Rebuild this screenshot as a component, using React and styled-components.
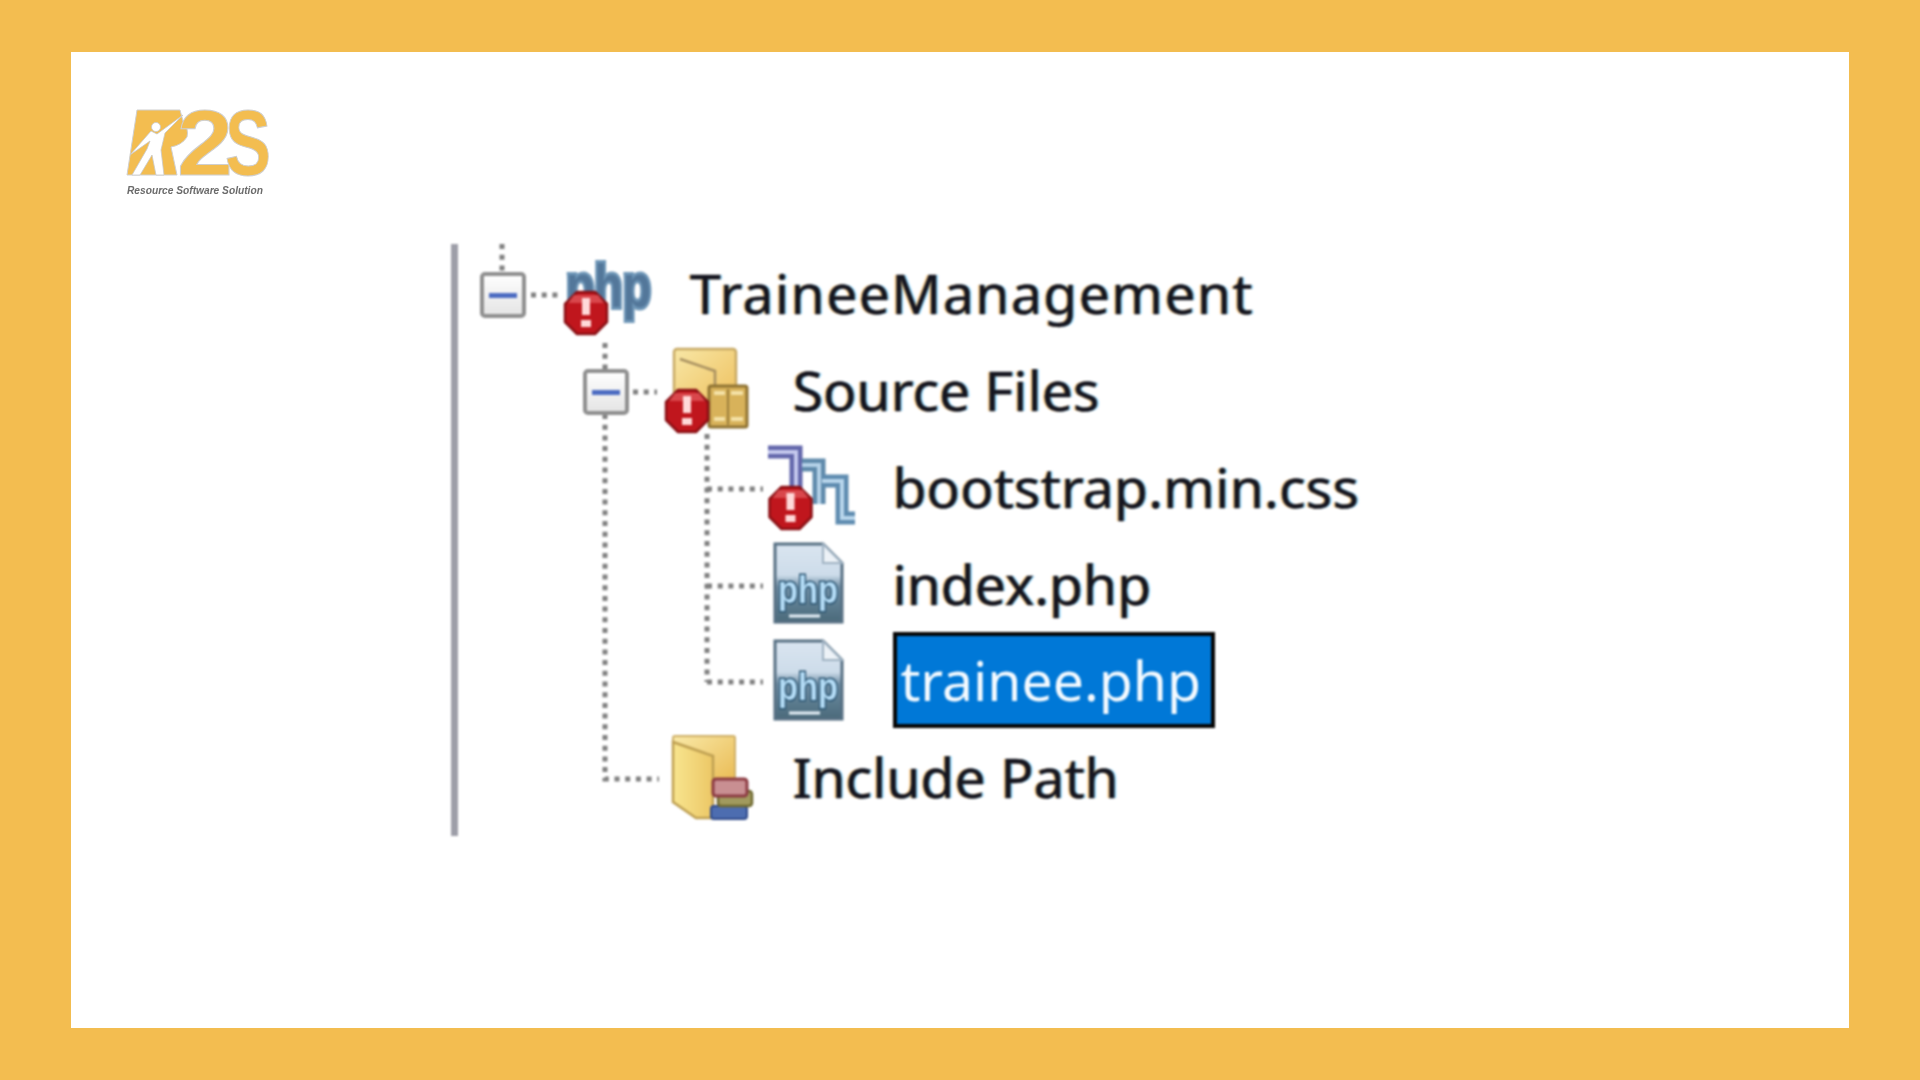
import React from 'react';
import styled, { createGlobalStyle } from 'styled-components';

const GlobalStyle = createGlobalStyle`
  html, body {
    margin: 0;
    padding: 0;
    background: #f3bd50;
  }
`;

const Page = styled.div`
  box-sizing: border-box;
  width: 1920px;
  height: 1080px;
  padding: 52px 71px;
  background: #f3bd50;
`;

const Card = styled.div`
  box-sizing: border-box;
  height: 976px;
  padding: 57px 56px 0;
  background: #ffffff;
`;

const LogoBox = styled.div`
  width: 145px;
  height: 87px;
  margin-bottom: 48px;
  filter: blur(0.4px);

  svg {
    display: block;
    overflow: visible;
  }
`;

const LogoCaption = styled.div`
  margin-top: 8px;
  font-family: 'Liberation Sans', Arial, sans-serif;
  font-style: italic;
  font-weight: 700;
  font-size: 10.2px;
  line-height: 12px;
  color: #6b6b6b;
  white-space: nowrap;
`;

const Tree = styled.div`
  position: relative;
  box-sizing: border-box;
  width: 1000px;
  height: 592px;
  margin-left: 324px;
  padding-top: 3px;
  border-left: 7px solid #9d9ea8;
  filter: blur(1px);
`;

const Connectors = styled.svg`
  position: absolute;
  left: -7px;
  top: 0;
  width: 400px;
  height: 592px;
`;

const Row = styled.div`
  position: relative;
  display: flex;
  align-items: center;
  height: 96.8px;
  padding-left: ${p => 22 + p.$level * 102.7}px;
`;

const ExpanderSlot = styled.div`
  flex: none;
  width: 85px;
  height: 46px;
`;

const IconSlot = styled.div`
  flex: none;
  width: 125px;
  height: 90px;

  svg {
    display: block;
    overflow: visible;
  }
`;

const Label = styled.div`
  display: flex;
  align-items: center;
  box-sizing: border-box;
  height: 96px;
  margin-left: ${p => (p.$selected ? '-2px' : p.$level === 2 ? '-3px' : '0')};
  margin-bottom: ${p => (p.$selected ? '5px' : '0')};
  padding: ${p => (p.$selected ? '0 10px 0 3px' : '0 0 5px')};
  border: ${p => (p.$selected ? '4px solid #050505' : '0')};
  background: ${p => (p.$selected ? '#0078d7' : 'transparent')};
  color: ${p => (p.$selected ? '#f4faff' : '#15151f')};
  font-family: 'Noto Sans', 'Open Sans', sans-serif;
  font-size: 55.3px;
  letter-spacing: ${p => p.$tracking || 0}px;
  line-height: 1;
  white-space: nowrap;
  -webkit-text-stroke: ${p => (p.$selected ? '0' : '0.4px currentColor')};
  text-shadow: ${p =>
    p.$selected
      ? 'none'
      : '-2px 0 rgba(255, 180, 70, 0.6), 2px 0 rgba(70, 190, 255, 0.55)'};
`;

const PhpLetters = styled.text`
  font-family: 'Liberation Sans', sans-serif;
  font-weight: 700;
  paint-order: stroke;
`;

const Expander = () => (
  <svg width="46" height="46" viewBox="0 0 46 46">
    <defs>
      <linearGradient id="expander" x1="0" y1="0" x2="0" y2="1">
        <stop offset="0" stopColor="#ffffff" />
        <stop offset="1" stopColor="#e4e4e4" />
      </linearGradient>
    </defs>
    <rect x="2" y="2" width="42" height="42" rx="3" fill="url(#expander)" stroke="#8f8f8f" strokeWidth="4" />
    <rect x="9" y="21" width="28" height="5" fill="#4c6cc2" />
  </svg>
);

const ErrorBadge = ({ x, y }) => (
  <g transform={`translate(${x} ${y})`}>
    <polygon
      points="-9,-21 9,-21 21,-9 21,9 9,21 -9,21 -21,9 -21,-9"
      fill="#c0161d"
      stroke="#8a1015"
      strokeWidth="2.5"
      strokeLinejoin="round"
    />
    <path d="M-12 -18 H12 L18 -10 H-18 Z" fill="#d9474c" />
    <rect x="-4" y="-15" width="8" height="17" fill="#ffd9d9" />
    <rect x="-5" y="7" width="10" height="7" fill="#ffd9d9" />
  </g>
);

const ProjectIcon = () => (
  <svg width="90" height="90" viewBox="0 0 90 90">
    <PhpLetters
      x="1"
      y="57"
      fontSize="62"
      textLength="85"
      lengthAdjust="spacingAndGlyphs"
      fill="#53779a"
      stroke="#6f97b8"
      strokeWidth="6"
    >
      php
    </PhpLetters>
    <ErrorBadge x={21} y={63} />
  </svg>
);

const SourceIcon = () => (
  <svg width="90" height="90" viewBox="0 0 90 90">
    <defs>
      <linearGradient id="srcFolder" x1="0" y1="0" x2="1" y2="1">
        <stop offset="0" stopColor="#f8e7a6" />
        <stop offset="1" stopColor="#eebf5c" />
      </linearGradient>
    </defs>
    <rect x="6" y="2" width="62" height="58" rx="3" fill="url(#srcFolder)" stroke="#c7a964" strokeWidth="2.5" />
    <path d="M12 12 L47 24 V48" fill="none" stroke="#a89060" strokeWidth="2.5" />
    <rect x="41" y="39" width="38" height="41" rx="2" fill="#d8b25a" stroke="#8f7332" strokeWidth="3" />
    <path d="M46 46 H57 M63 46 H75 M46 72 H57 M63 72 H75" stroke="#f4e2a8" strokeWidth="4" />
    <path d="M60 42 V78" stroke="#9c7f3c" strokeWidth="2" />
    <ErrorBadge x={19} y={64} />
  </svg>
);

const CssIcon = () => {
  const tubes = [
    { d: 'M-2 8 H26 V46', outer: '#6367ab', inner: '#c5c9ee' },
    { d: 'M32 21 H49 V60', outer: '#5f8aab', inner: '#b5d2e8' },
    { d: 'M52 37 H72 V74 H85', outer: '#5f8cb0', inner: '#b9d6ec' },
  ];
  return (
    <svg width="90" height="90" viewBox="0 0 90 90">
      {tubes.map(t => (
        <g key={t.d} fill="none">
          <path d={t.d} stroke={t.outer} strokeWidth="13" />
          <path d={t.d} stroke={t.inner} strokeWidth="4" />
        </g>
      ))}
      <ErrorBadge x={20.5} y={64} />
    </svg>
  );
};

const PhpFileIcon = () => (
  <svg width="90" height="90" viewBox="0 0 90 90">
    <defs>
      <linearGradient id="phpPage" x1="0" y1="0" x2="0" y2="1">
        <stop offset="0" stopColor="#dae5f0" />
        <stop offset="0.4" stopColor="#cddcea" />
        <stop offset="0.55" stopColor="#6f8ea5" />
        <stop offset="1" stopColor="#4a6a7a" />
      </linearGradient>
    </defs>
    <path d="M5 3 H53 L72 22 V81 H5 Z" fill="url(#phpPage)" stroke="#566f82" strokeWidth="3" />
    <path d="M53 3 V22 H72 Z" fill="#edf2f7" stroke="#9fb2c2" strokeWidth="2" />
    <PhpLetters
      x="8"
      y="62"
      fontSize="38"
      textLength="60"
      lengthAdjust="spacingAndGlyphs"
      fill="#b4dcf6"
      stroke="#2a5471"
      strokeWidth="3"
    >
      php
    </PhpLetters>
    <path d="M19 75 H50" stroke="#e8f1f8" strokeWidth="3" />
  </svg>
);

const IncludeIcon = () => (
  <svg width="90" height="90" viewBox="0 0 90 90">
    <defs>
      <linearGradient id="incFolder" x1="0" y1="0" x2="1" y2="1">
        <stop offset="0" stopColor="#f9e9a8" />
        <stop offset="1" stopColor="#e9b950" />
      </linearGradient>
      <linearGradient id="incFlap" x1="0" y1="0" x2="1" y2="0">
        <stop offset="0" stopColor="#f8e58f" />
        <stop offset="1" stopColor="#ecc766" />
      </linearGradient>
    </defs>
    <rect x="5" y="2" width="62" height="50" rx="2" fill="url(#incFolder)" stroke="#cfb069" strokeWidth="2" />
    <path d="M5 8 L45 22 V84 L28 84 L5 68 Z" fill="url(#incFlap)" stroke="#bfa052" strokeWidth="2.5" />
    <rect x="43" y="72" width="36" height="13" rx="3" fill="#4d6db0" stroke="#2f4a8a" strokeWidth="2" />
    <rect x="50" y="57" width="34" height="15" rx="3" fill="#a19a5e" stroke="#6f6a32" strokeWidth="2.5" />
    <rect x="45" y="45" width="34" height="17" rx="3" fill="#c98f92" stroke="#8c3b42" strokeWidth="3" />
  </svg>
);

const LOGO_FONT = "'Liberation Sans', Arial, sans-serif";

const Logo = () => (
  <LogoBox>
    <svg width="145" height="68" viewBox="0 0 145 68">
      <path
        d="M10 1 H53 L56 12 Q62 20 60 28 Q55 36 44 38 L50 66 H0 Z"
        fill="#f3bd50"
        stroke="#cfcfcf"
        strokeWidth="1"
      />
      <path
        d="M56 6 L38 24 L34 41 L37 66 H29 L25 46 L13 66 H5 L20 40 L23 32 L3 46 L24 22 L30 25 Z"
        fill="#ffffff"
        stroke="#c9c9c9"
        strokeWidth="0.8"
      />
      <circle cx="29" cy="18" r="4.5" fill="#ffffff" stroke="#c9c9c9" strokeWidth="0.8" />
      <text
        x="50"
        y="66"
        fontFamily={LOGO_FONT}
        fontWeight="700"
        fontSize="92"
        textLength="56"
        lengthAdjust="spacingAndGlyphs"
        fill="#f3bd50"
        stroke="#cfcfcf"
        strokeWidth="1"
      >
        2
      </text>
      <text
        x="98"
        y="66"
        fontFamily={LOGO_FONT}
        fontWeight="700"
        fontSize="92"
        textLength="46"
        lengthAdjust="spacingAndGlyphs"
        fill="#f3bd50"
        stroke="#cfcfcf"
        strokeWidth="1"
      >
        S
      </text>
    </svg>
    <LogoCaption>Resource Software Solution</LogoCaption>
  </LogoBox>
);

const rows = [
  { name: 'TraineeManagement', level: 0, expander: true, icon: <ProjectIcon />, tracking: 1.4 },
  { name: 'Source Files', level: 1, expander: true, icon: <SourceIcon /> },
  { name: 'bootstrap.min.css', level: 2, icon: <CssIcon />, tracking: 0.2 },
  { name: 'index.php', level: 2, icon: <PhpFileIcon /> },
  { name: 'trainee.php', level: 2, icon: <PhpFileIcon />, selected: true },
  { name: 'Include Path', level: 1, icon: <IncludeIcon /> },
];

export default function App() {
  return (
    <Page>
      <GlobalStyle />
      <Card>
        <Logo />
        <Tree>
          <Connectors viewBox="0 0 400 592" fill="none" stroke="#808080" strokeWidth="5" strokeDasharray="5 5.7">
            <path d="M51 0 V28" />
            <path d="M80 51 H112" />
            <path d="M154 99 V125" />
            <path d="M154 170 V535 H208" />
            <path d="M182 148 H206" />
            <path d="M256 190 V438" />
            <path d="M256 245 H312" />
            <path d="M256 342 H312" />
            <path d="M256 438 H312" />
          </Connectors>
          {rows.map(row => (
            <Row key={row.name} $level={row.level}>
              <ExpanderSlot>{row.expander && <Expander />}</ExpanderSlot>
              <IconSlot>{row.icon}</IconSlot>
              <Label $selected={row.selected} $level={row.level} $tracking={row.tracking}>
                {row.name}
              </Label>
            </Row>
          ))}
        </Tree>
      </Card>
    </Page>
  );
}
